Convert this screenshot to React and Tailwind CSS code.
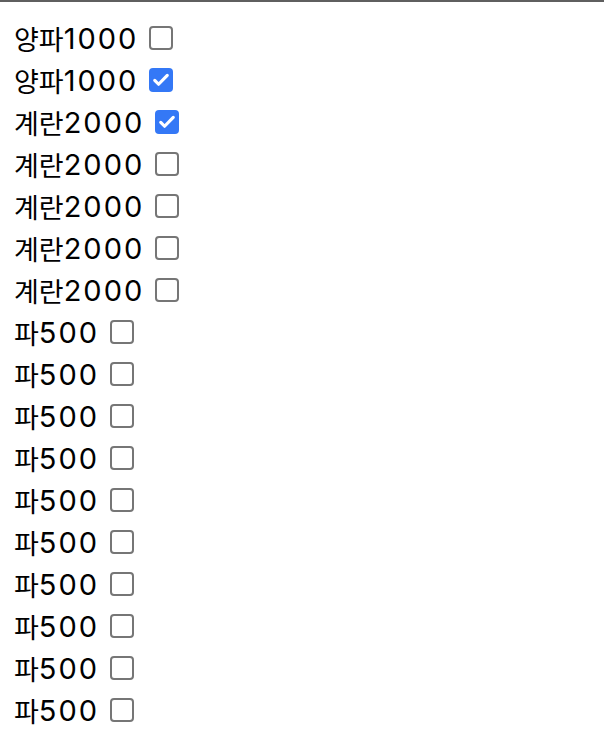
const items = [
  { name: '양파', price: 1000, checked: false },
  { name: '양파', price: 1000, checked: true },
  { name: '계란', price: 2000, checked: true },
  { name: '계란', price: 2000, checked: false },
  { name: '계란', price: 2000, checked: false },
  { name: '계란', price: 2000, checked: false },
  { name: '계란', price: 2000, checked: false },
  ...Array.from({ length: 10 }, () => ({ name: '파', price: 500, checked: false })),
  { name: '계란', price: 2000, checked: false },
];

function Box({ checked }) {
  if (checked) {
    return (
      <span className="inline-flex h-[24px] w-[24px] shrink-0 items-center justify-center rounded-[4px] bg-[#3478f6]">
        <svg viewBox="0 0 24 24" className="h-[20px] w-[20px]" fill="none">
          <path d="M4.5 12.5l4.6 4.6L19.5 6.5" stroke="white" strokeWidth="3.8" strokeLinecap="round" strokeLinejoin="round" />
        </svg>
      </span>
    );
  }
  return <span className="inline-block h-[24px] w-[24px] shrink-0 rounded-[4px] border-2 border-[#767676] bg-white" />;
}

export default function App() {
  return (
    <div className="min-h-screen overflow-hidden border-t-2 border-[#5f5f5f] bg-white pt-[15px] pl-[14px] text-black">
      {items.map((item, i) => (
        <div key={i} className="flex h-[42px] items-center gap-[11px]">
          <span className="flex items-center leading-none">
            <span className="font-['Noto_Sans_CJK_KR',sans-serif] text-[27px]">{item.name}</span>
            <span className="font-['Inter',sans-serif] text-[29px] tracking-[2px] proportional-nums">{item.price}</span>
          </span>
          <Box checked={item.checked} />
        </div>
      ))}
    </div>
  );
}
